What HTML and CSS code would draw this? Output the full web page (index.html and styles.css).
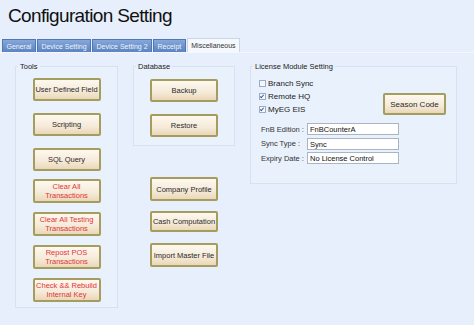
FILE: index.html
```html
<!DOCTYPE html>
<html lang="en">

<head>
    <meta charset="UTF-8">
    <meta name="viewport" content="width=device-width, initial-scale=1.0">
    <title>Configuration Setting</title>
    <link rel="stylesheet" href="styles.css">
</head>

<body>
    <div class="window">
        <h1>Configuration Setting</h1>

        <div class="tabs">
            <div class="tab">General</div>
            <div class="tab">Device Setting</div>
            <div class="tab">Device Setting 2</div>
            <div class="tab">Receipt</div>
            <div class="tab active">Miscellaneous</div>
        </div>

        <div class="page">
            <fieldset class="group tools">
                <legend>Tools</legend>
                <button class="btn">User Defined Field</button>
                <button class="btn">Scripting</button>
                <button class="btn">SQL Query</button>
                <button class="btn two danger">Clear All<br>Transactions</button>
                <button class="btn two danger">Clear All Testing<br>Transactions</button>
                <button class="btn two danger">Repost POS<br>Transactions</button>
                <button class="btn two danger">Check &amp;&amp; Rebuild<br>Internal Key</button>
            </fieldset>

            <div class="column">
                <fieldset class="group database">
                    <legend>Database</legend>
                    <button class="btn">Backup</button>
                    <button class="btn">Restore</button>
                </fieldset>

                <div class="extra">
                    <button class="btn tall">Company Profile</button>
                    <button class="btn short">Cash Computation</button>
                    <button class="btn tall last">Import Master File</button>
                </div>
            </div>

            <fieldset class="group license">
                <legend>License Module Setting</legend>
                <div class="license-top">
                    <div class="checks">
                        <label class="check"><span class="box"></span>Branch Sync</label>
                        <label class="check"><span class="box checked"></span>Remote HQ</label>
                        <label class="check"><span class="box checked"></span>MyEG EIS</label>
                    </div>
                    <button class="btn season">Season Code</button>
                </div>
                <div class="fields">
                    <div class="field"><span class="field-label">FnB Edition :</span><span class="textbox">FnBCounterA</span></div>
                    <div class="field"><span class="field-label">Sync Type :</span><span class="textbox">Sync</span></div>
                    <div class="field"><span class="field-label">Expiry Date :</span><span class="textbox">No License Control</span></div>
                </div>
            </fieldset>
        </div>
    </div>
</body>

</html>
```

FILE: styles.css
```css
/* General Styles */
body {
    margin: 0;
    padding: 0;
    font-family: 'Liberation Sans', Arial, sans-serif;
    background-color: #e4eefb;
    color: #222;
}

.window {
    width: 474px;
    height: 325px;
    overflow: hidden;
    background-color: #e6effb;
}

h1 {
    margin: 0;
    padding: 5px 0 0 8px;
    height: 33px;
    box-sizing: border-box;
    font-size: 19px;
    font-weight: normal;
    letter-spacing: -0.65px;
    color: #111;
}

/* Tabs */
.tabs {
    display: flex;
    padding: 6px 0 0 2px;
    height: 20px;
    box-sizing: border-box;
    border-bottom: 1px solid #f4f8fd;
}

.tab {
    font-size: 7px;
    line-height: 13px;
    padding: 0 3.5px;
    margin-right: 1px;
    color: #eef3fb;
    background: linear-gradient(#86a7d8, #5b84c2);
    border: 1px solid #4f77b5;
    border-bottom: none;
}

.tab.active {
    margin-top: -1px;
    line-height: 14px;
    color: #333;
    background: #f5f8fd;
    border-color: #c9d6e8;
}

/* Page */
.page {
    display: flex;
    align-items: flex-start;
    padding: 9px 0 0 15px;
    gap: 15px;
}

.group {
    margin: 0;
    padding: 0;
    border: 1px solid #d6e2f1;
    background-color: #e9f1fc;
    box-sizing: border-box;
}

.group legend {
    font-size: 7.5px;
    color: #222;
    padding: 0 2px;
    margin-left: 2px;
}

.tools {
    width: 103px;
    height: 246px;
    display: flex;
    flex-direction: column;
    align-items: center;
    padding-top: 7px;
}

.column {
    width: 102px;
    display: flex;
    flex-direction: column;
}

.database {
    height: 84px;
    display: flex;
    flex-direction: column;
    align-items: center;
    padding-top: 8px;
}

.extra {
    display: flex;
    flex-direction: column;
    align-items: center;
    margin-top: 31px;
}

.license {
    width: 207px;
    height: 122px;
    padding: 6px 0 0 8px;
}

.license legend {
    margin-left: -6px;
}

/* Buttons */
.btn {
    width: 68px;
    height: 23px;
    padding: 0;
    font-family: 'Liberation Sans', Arial, sans-serif;
    font-size: 7.5px;
    line-height: 9px;
    color: #2a2a2a;
    background: linear-gradient(#fdf8ef, #f5ead8 60%, #ead7b8);
    border: 2px solid #a59d5e;
    border-radius: 2px;
    box-sizing: border-box;
}

.btn + .btn {
    margin-top: 12px;
}

.btn.two {
    height: 24px;
    margin-top: 9px;
}

.btn + .btn.two {
    margin-top: 8px;
}

.btn.two + .btn.two {
    margin-top: 9px;
}

.btn.danger {
    color: #e5323a;
}

.database .btn + .btn {
    margin-top: 12px;
}

.extra .btn + .btn {
    margin-top: 10px;
}

.extra .btn.last {
    margin-top: 11px;
}

.btn.tall {
    height: 24px;
}

.btn.short {
    height: 21px;
}

.btn.season {
    width: 63px;
    height: 22px;
    font-size: 8px;
    margin-top: 16px;
}

/* License module */
.license-top {
    display: flex;
    justify-content: space-between;
    padding-right: 10px;
}

.checks {
    display: flex;
    flex-direction: column;
    gap: 4px;
    padding-top: 2px;
}

.check {
    display: flex;
    align-items: center;
    font-size: 8px;
    line-height: 9px;
    color: #222;
}

.box {
    width: 5px;
    height: 5px;
    margin-right: 2px;
    border: 1px solid #9aaccc;
    background: #f4f7fc;
    position: relative;
}

.box.checked::after {
    content: "";
    position: absolute;
    left: 1px;
    top: 0;
    width: 1px;
    height: 3px;
    border: solid #4a5a80;
    border-width: 0 1px 1px 0;
    transform: rotate(40deg);
}

.fields {
    display: flex;
    flex-direction: column;
    gap: 2.5px;
    margin-top: 8px;
    padding-left: 2px;
}

.field {
    display: flex;
    align-items: center;
}

.field-label {
    width: 46px;
    font-size: 7.5px;
    color: #333;
}

.textbox {
    width: 92px;
    height: 12px;
    box-sizing: border-box;
    padding-left: 2px;
    font-size: 7.5px;
    line-height: 11px;
    background: #fff;
    border: 1px solid #a9b4c4;
    color: #111;
}
```
